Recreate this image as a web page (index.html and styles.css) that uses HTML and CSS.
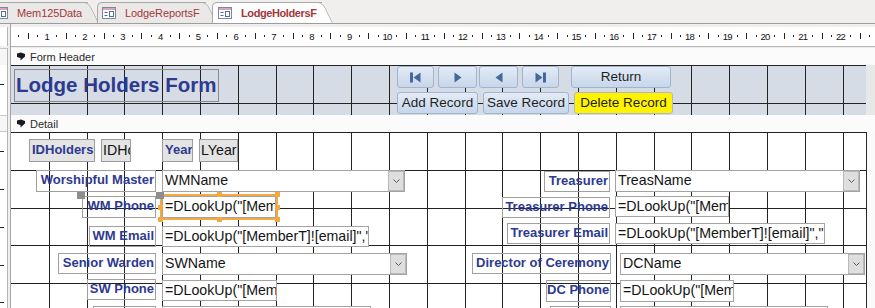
FILE: index.html
```html
<!DOCTYPE html>
<html>
<head>
<meta charset="utf-8">
<title>LodgeHoldersF</title>
<link rel="stylesheet" href="styles.css">
</head>
<body>
<div class="app">
  <div class="tabbar">
    <div class="tab tab1">
      <svg class="ticon" width="14" height="12" viewBox="0 0 14 12"><rect x="0.5" y="0.5" width="13" height="11" fill="#fff" stroke="#7d8799"/><rect x="1" y="1" width="12" height="2" fill="#dba6ae"/><path d="M2.5 5.5h3M2.5 8.5h3" stroke="#4f6ea3"/><rect x="7.5" y="4.5" width="4" height="5" fill="none" stroke="#4f6ea3"/></svg>
      <span class="tlabel">Mem125Data</span>
    </div>
    <div class="tab tab2">
      <svg class="ticon" width="14" height="12" viewBox="0 0 14 12"><rect x="0.5" y="0.5" width="13" height="11" fill="#fff" stroke="#7d8799"/><rect x="1" y="1" width="12" height="2" fill="#dba6ae"/><path d="M2.5 5.5h3M2.5 8.5h3" stroke="#4f6ea3"/><rect x="7.5" y="4.5" width="4" height="5" fill="none" stroke="#4f6ea3"/></svg>
      <span class="tlabel">LodgeReportsF</span>
    </div>
    <div class="tab tab3 active">
      <svg class="ticon" width="14" height="12" viewBox="0 0 14 12"><rect x="0.5" y="0.5" width="13" height="11" fill="#fff" stroke="#7d8799"/><rect x="1" y="1" width="12" height="2" fill="#dba6ae"/><path d="M2.5 5.5h3M2.5 8.5h3" stroke="#4f6ea3"/><rect x="7.5" y="4.5" width="4" height="5" fill="none" stroke="#4f6ea3"/></svg>
      <span class="tlabel">LodgeHoldersF</span>
    </div>
  </div>

  <div class="workspace">
    <div class="vruler">
      <svg width="10" height="284" viewBox="0 0 10 284">
        <rect x="0" y="3" width="7" height="19" fill="#fff"/>
        <rect x="0" y="24" width="7" height="260" fill="#fff"/>
        <rect x="0" y="24" width="7" height="17" fill="#f6f6f6"/>
        <rect x="0" y="91" width="7" height="17" fill="#f6f6f6"/>
        <path d="M7.5 3V22M7.5 24V284" stroke="#b5b5b5"/>
        <path d="M0 24.5H7M0 91.5H7M0 107.5H7" stroke="#c8c8c8"/>
        <path d="M0 60.5H4M0 127.5H4M0 165.5H4M0 203.5H4M0 241.5H4M0 278.5H4" stroke="#222"/>
      </svg>
    </div>

    <div class="formcol">
      <div class="hruler">
        <div class="ruler-band">
          <svg width="864" height="19" viewBox="0 0 864 19">
            <path stroke="#222" d="M7.5 8v2M17.5 6v6M26.5 8v2M45.5 8v2M55.5 6v6M64.5 8v2M83.5 8v2M93.5 6v6M102.5 8v2M121.5 8v2M130.5 6v6M140.5 8v2M159.5 8v2M168.5 6v6M178.5 8v2M196.5 8v2M206.5 6v6M215.5 8v2M234.5 8v2M244.5 6v6M253.5 8v2M272.5 8v2M282.5 6v6M291.5 8v2M310.5 8v2M319.5 6v6M329.5 8v2M348.5 8v2M357.5 6v6M367.5 8v2M385.5 8v2M395.5 6v6M404.5 8v2M423.5 8v2M433.5 6v6M442.5 8v2M461.5 8v2M471.5 6v6M480.5 8v2M499.5 8v2M508.5 6v6M518.5 8v2M537.5 8v2M546.5 6v6M556.5 8v2M574.5 8v2M584.5 6v6M593.5 8v2M612.5 8v2M622.5 6v6M631.5 8v2M650.5 8v2M660.5 6v6M669.5 8v2M688.5 8v2M697.5 6v6M707.5 8v2M726.5 8v2M735.5 6v6M745.5 8v2M763.5 8v2M773.5 6v6M782.5 8v2M801.5 8v2M811.5 6v6M820.5 8v2M839.5 8v2M849.5 6v6M858.5 8v2"/>
            <g class="rnum" text-anchor="middle">
              <text x="35.8" y="12.5">1</text><text x="73.6" y="12.5">2</text><text x="111.4" y="12.5">3</text><text x="149.2" y="12.5">4</text><text x="187" y="12.5">5</text><text x="224.8" y="12.5">6</text><text x="262.6" y="12.5">7</text><text x="300.4" y="12.5">8</text><text x="338.2" y="12.5">9</text><text x="376" y="12.5">10</text><text x="413.8" y="12.5">11</text><text x="451.6" y="12.5">12</text><text x="489.4" y="12.5">13</text><text x="527.2" y="12.5">14</text><text x="565" y="12.5">15</text><text x="602.8" y="12.5">16</text><text x="640.6" y="12.5">17</text><text x="678.4" y="12.5">18</text><text x="716.2" y="12.5">19</text><text x="754" y="12.5">20</text><text x="791.8" y="12.5">21</text><text x="829.6" y="12.5">22</text>
            </g>
          </svg>
        </div>
      </div>

      <div class="secbar">
        <svg class="secicon" width="10" height="9" viewBox="0 0 10 9"><path d="M1 1.5L5 0.5L9 2V4.5L4.5 8.5V6L1 5Z" fill="#1a1a1a"/></svg>
        <span>Form Header</span>
      </div>

      <div class="secwrap headwrap">
        <div class="section header">
          <svg class="grid" width="855" height="50" viewBox="0 0 855 50">
            <path stroke="#222" d="M38.5 0V50M76.5 0V50M113.5 0V50M151.5 0V50M189.5 0V50M227.5 0V50M265.5 0V50M302.5 0V50M340.5 0V50M378.5 0V50M416.5 0V50M454.5 0V50M491.5 0V50M529.5 0V50M567.5 0V50M605.5 0V50M643.5 0V50M680.5 0V50M718.5 0V50M756.5 0V50M794.5 0V50M832.5 0V50M0 0.5H855M0 38.5H855"/>
          </svg>
          <div class="ctl title">Lodge Holders Form</div>
          <div class="navgroup">
            <div class="navrow">
              <div class="btn b-first"><svg width="11" height="11" viewBox="0 0 11 11"><rect x="0" y="0.5" width="3" height="10" fill="#44679c"/><path d="M10.5 0.5v10L3.5 5.5z" fill="#44679c"/></svg></div>
              <div class="btn b-next"><svg width="8" height="11" viewBox="0 0 8 11"><path d="M0.5 0.5v10l7-5z" fill="#44679c"/></svg></div>
              <div class="btn b-prev"><svg width="8" height="11" viewBox="0 0 8 11"><path d="M7.5 0.5v10l-7-5z" fill="#44679c"/></svg></div>
              <div class="btn b-last"><svg width="11" height="11" viewBox="0 0 11 11"><path d="M0.5 0.5v10l7-5z" fill="#44679c"/><rect x="8" y="0.5" width="3" height="10" fill="#44679c"/></svg></div>
              <div class="btn b-return">Return</div>
            </div>
            <div class="navrow">
              <div class="btn b-add">Add Record</div>
              <div class="btn b-save">Save Record</div>
              <div class="btn b-del">Delete Record</div>
            </div>
          </div>
        </div>
      </div>

      <div class="secbar">
        <svg class="secicon" width="10" height="9" viewBox="0 0 10 9"><path d="M1 1.5L5 0.5L9 2V4.5L4.5 8.5V6L1 5Z" fill="#1a1a1a"/></svg>
        <span>Detail</span>
      </div>

      <div class="secwrap detailwrap">
        <div class="section detail">
          <svg class="grid" width="855" height="200" viewBox="0 0 855 200">
            <path stroke="#222" d="M38.5 0V200M76.5 0V200M113.5 0V200M151.5 0V200M189.5 0V200M227.5 0V200M265.5 0V200M302.5 0V200M340.5 0V200M378.5 0V200M416.5 0V200M454.5 0V200M491.5 0V200M529.5 0V200M567.5 0V200M605.5 0V200M643.5 0V200M680.5 0V200M718.5 0V200M756.5 0V200M794.5 0V200M832.5 0V200M0 0.5H855M0 38.5H855M0 76.5H855M0 113.5H855M0 151.5H855M0 189.5H855"/>
          </svg>

          <div class="ctl lbl gray c-idh-l">IDHolders</div>
          <div class="ctl txt gray c-idh-t">IDHolders</div>
          <div class="ctl lbl gray c-year-l">Year</div>
          <div class="ctl txt gray c-year-t">LYear</div>

          <div class="ctl lbl c-wm-l">Worshipful Master</div>
          <div class="ctl cbo c-wm-c"><span class="val">WMName</span><span class="dd"><svg width="7" height="4" viewBox="0 0 7 4"><path d="M0.5 0.5L3.5 3.5L6.5 0.5" fill="none" stroke="#5a5a5a"/></svg></span></div>

          <div class="ctl lbl c-wmp-l">WM Phone</div>
          <div class="sel c-wmp-t">
            <div class="txt seltxt">=DLookUp("[MemberT]![phone]")</div>
            <span class="rh h-tl"></span><span class="rh h-tm"></span><span class="rh h-tr"></span>
            <span class="rh h-lm"></span><span class="rh h-rm"></span>
            <span class="rh h-bl"></span><span class="rh h-bm"></span><span class="rh h-br"></span>
          </div>
          <span class="mh mh-l"></span>
          <span class="mh mh-t"></span>

          <div class="ctl lbl c-wme-l">WM Email</div>
          <div class="ctl txt c-wme-t">=DLookUp("[MemberT]![email]","MemberT")</div>

          <div class="ctl lbl c-sw-l">Senior Warden</div>
          <div class="ctl cbo c-sw-c"><span class="val">SWName</span><span class="dd"><svg width="7" height="4" viewBox="0 0 7 4"><path d="M0.5 0.5L3.5 3.5L6.5 0.5" fill="none" stroke="#5a5a5a"/></svg></span></div>

          <div class="ctl lbl c-swp-l">SW Phone</div>
          <div class="ctl txt c-swp-t">=DLookUp("[MemberT]![phone]")</div>

          <div class="ctl lbl c-swe-l">SW Email</div>
          <div class="ctl txt c-swe-t">=DLookUp("[MemberT]![email]","MemberT")</div>

          <div class="ctl lbl c-tr-l">Treasurer</div>
          <div class="ctl cbo c-tr-c"><span class="val">TreasName</span><span class="dd"><svg width="7" height="4" viewBox="0 0 7 4"><path d="M0.5 0.5L3.5 3.5L6.5 0.5" fill="none" stroke="#5a5a5a"/></svg></span></div>

          <div class="ctl lbl c-trp-l">Treasurer Phone</div>
          <div class="ctl txt c-trp-t">=DLookUp("[MemberT]![phone]")</div>

          <div class="ctl lbl c-tre-l">Treasurer Email</div>
          <div class="ctl txt c-tre-t">=DLookUp("[MemberT]![email]","MemberT")</div>

          <div class="ctl lbl c-dc-l">Director of Ceremony</div>
          <div class="ctl cbo c-dc-c"><span class="val">DCName</span><span class="dd"><svg width="7" height="4" viewBox="0 0 7 4"><path d="M0.5 0.5L3.5 3.5L6.5 0.5" fill="none" stroke="#5a5a5a"/></svg></span></div>

          <div class="ctl lbl c-dcp-l">DC Phone</div>
          <div class="ctl txt c-dcp-t">=DLookUp("[MemberT]![phone]")</div>

          <div class="ctl lbl c-dce-l">DC Email</div>
          <div class="ctl txt c-dce-t">=DLookUp("[MemberT]![email]","MemberT")</div>
        </div>
      </div>
    </div>
  </div>
</div>
</body>
</html>
```
FILE: styles.css
```css
* { box-sizing: border-box; }
html, body { margin: 0; padding: 0; }
body {
  width: 875px;
  height: 308px;
  overflow: hidden;
  background: #f0efee;
  font-family: "Liberation Sans", Arial, sans-serif;
}
svg { display: block; }

.app {
  width: 875px;
  height: 308px;
  overflow: hidden;
  display: flex;
  flex-direction: column;
}

/* ---------- document tabs ---------- */
.tabbar {
  flex: none;
  height: 24px;
  display: flex;
  align-items: flex-end;
  background: #f0efee;
  border-bottom: 1px solid #9d9d9d;
}
.tab {
  position: relative;
  height: 21px;
  display: flex;
  align-items: center;
  gap: 9px;
  padding-bottom: 1px;
  border: 1px solid #a9a9a9;
  border-right: none;
  border-bottom: none;
  border-top-left-radius: 5px;
  background: #eae9e8;
  color: #a4373a;
  font-size: 11px;
  letter-spacing: -0.1px;
  white-space: nowrap;
}
.tab::after {
  content: "";
  position: absolute;
  left: 100%;
  top: -1px;
  bottom: 0;
  width: 10px;
  background: inherit;
  border-top: 1px solid #a9a9a9;
  border-right: 1px solid #a9a9a9;
  border-top-right-radius: 6px;
  transform: skewX(26deg);
  transform-origin: bottom left;
}
.tlabel { position: relative; z-index: 1; }
.ticon { position: relative; z-index: 1; flex: none; }
.tab1 { z-index: 1; margin-left: -10px; width: 98px; padding-left: 3px; }
.tab2 { z-index: 2; margin-left: 9px; width: 109px; padding-left: 4px; }
.tab3 { z-index: 3; margin-left: 6px; width: 110px; padding-left: 5px; }
.tab.active { background: #fdfdfd; font-weight: bold; letter-spacing: -0.4px; }

/* ---------- workspace ---------- */
.workspace {
  flex: 1;
  min-height: 0;
  display: flex;
}
.vruler {
  flex: none;
  width: 11px;
  background: #f0efee;
  border-right: 1px solid #a3a3a3;
}
.formcol {
  flex: 1;
  min-width: 0;
  display: flex;
  flex-direction: column;
  background: #f0efee;
}

.hruler {
  flex: none;
  height: 24px;
  padding-top: 3px;
  padding-bottom: 1px;
}
.ruler-band {
  height: 20px;
  background: #fff;
  border-bottom: 1px solid #b4b4b4;
}
.rnum {
  font-family: "Liberation Sans", Arial, sans-serif;
  font-size: 9.5px;
  letter-spacing: -0.8px;
  fill: #111;
}

.secbar {
  flex: none;
  height: 17px;
  display: flex;
  align-items: center;
  gap: 4px;
  padding-left: 5px;
  background: #fbfbfb;
  font-size: 11px;
  color: #2b2b2b;
}

.secwrap { flex: none; }
.headwrap { height: 50px; background: #e8e8e8; }
.detailwrap { flex: 1; min-height: 0; background: #fafafa; overflow: hidden; }

.section {
  position: relative;
  width: 855px;
}
.header { height: 50px; background: #d6dce5; }
.detail { width: 856px; height: 200px; background: #fff; border-right: 1px solid #2a2a2a; }
.grid { position: absolute; left: 0; top: 0; shape-rendering: crispEdges; }

/* ---------- controls ---------- */
.ctl {
  position: absolute;
  overflow: hidden;
  white-space: nowrap;
}
.title {
  left: 3px; top: 4px; width: 205px; height: 33px;
  border: 1px solid #8a8a8a;
  padding-left: 1px;
  font-size: 20.5px;
  font-weight: bold;
  line-height: 29px;
  color: #2e3a90;
}

.navgroup {
  position: absolute;
  left: 386px;
  top: 1px;
  display: flex;
  flex-direction: column;
  gap: 4px;
}
.navrow { display: flex; }
.btn {
  height: 22px;
  display: flex;
  align-items: center;
  justify-content: center;
  border: 1px solid #a2b3cd;
  border-radius: 3px;
  background: linear-gradient(#e3ebf6, #c7d6ea);
  font-size: 13.5px;
  line-height: 20px;
  color: #1e1e1e;
  white-space: nowrap;
}
.b-first { width: 37px; }
.b-next { width: 39px; margin-left: 4px; }
.b-prev { width: 39px; margin-left: 2px; }
.b-last { width: 37px; margin-left: 4px; }
.b-return { width: 100px; margin-left: 12px; }
.b-add { width: 81px; }
.b-save { width: 86px; margin-left: 5px; }
.b-del { width: 99px; margin-left: 5px; background: #fff300; border-color: #b2b8c2; }

.lbl {
  border: 1px solid #a0a0a0;
  color: #2e3a90;
  font-size: 13px;
  font-weight: bold;
  text-align: right;
  padding-right: 1px;
  line-height: 17px;
}
.lbl.gray {
  background: #e4e4e4;
  border-color: #9c9c9c;
  text-align: left;
  padding-left: 2px;
  padding-right: 0;
  line-height: 19px;
}
.txt {
  background: #fff;
  border: 1px solid #a3a3a3;
  color: #141414;
  font-size: 14.2px;
  padding-left: 2px;
  line-height: 19px;
  overflow: hidden;
  white-space: nowrap;
}
.txt.gray { background: #e4e4e4; border-color: #9c9c9c; padding-left: 1px; line-height: 20px; }

.cbo {
  display: flex;
  background: #fff;
  border: 1px solid #a3a3a3;
}
.cbo .val {
  flex: 1;
  padding-left: 2px;
  font-size: 14.2px;
  line-height: 19px;
  color: #141414;
  overflow: hidden;
}
.cbo .dd {
  flex: none;
  width: 16px;
  display: flex;
  align-items: center;
  justify-content: center;
  background: #dedede;
  border: 1px solid #b9b9b9;
}

/* positions on the design surface */
.c-idh-l { left: 18px; top: 7px; width: 66px; height: 23px; }
.c-idh-t { left: 90px; top: 7px; width: 30px; height: 23px; }
.c-year-l { left: 151px; top: 7px; width: 31px; height: 23px; }
.c-year-t { left: 188px; top: 7px; width: 39px; height: 23px; }
.c-wm-l { left: 25px; top: 38px; width: 120px; height: 22px; }
.c-wm-c { left: 151px; top: 38px; width: 243px; height: 22px; }
.c-wmp-l { left: 71px; top: 64px; width: 74px; height: 22px; }
.c-wme-l { left: 78px; top: 94px; width: 67px; height: 21px; }
.c-wme-t { left: 151px; top: 94px; width: 207px; height: 21px; }
.c-sw-l { left: 47px; top: 121px; width: 98px; height: 21px; }
.c-sw-c { left: 151px; top: 121px; width: 245px; height: 22px; }
.c-swp-l { left: 76px; top: 147px; width: 69px; height: 21px; }
.c-swp-t { left: 151px; top: 148px; width: 115px; height: 21px; }
.c-swe-l { left: 82px; top: 174px; width: 63px; height: 21px; }
.c-swe-t { left: 151px; top: 174px; width: 209px; height: 21px; }
.c-tr-l { left: 533px; top: 39px; width: 66px; height: 21px; }
.c-tr-c { left: 604px; top: 38px; width: 245px; height: 22px; }
.c-trp-l { left: 491px; top: 65px; width: 108px; height: 21px; }
.c-trp-t { left: 604px; top: 64px; width: 114px; height: 21px; }
.c-tre-l { left: 496px; top: 91px; width: 103px; height: 21px; }
.c-tre-t { left: 604px; top: 91px; width: 210px; height: 21px; }
.c-dc-l { left: 461px; top: 121px; width: 139px; height: 21px; }
.c-dc-c { left: 609px; top: 121px; width: 245px; height: 22px; }
.c-dcp-l { left: 535px; top: 148px; width: 65px; height: 22px; }
.c-dcp-t { left: 609px; top: 148px; width: 114px; height: 22px; }
.c-dce-l { left: 539px; top: 174px; width: 61px; height: 21px; }
.c-dce-t { left: 609px; top: 174px; width: 208px; height: 21px; }

/* selected control */
.sel {
  position: absolute;
  outline: 2px solid #f5a742;
}
.c-wmp-t { left: 151px; top: 64px; width: 114px; height: 22px; }
.seltxt { width: 100%; height: 100%; }
.rh {
  position: absolute;
  width: 5px;
  height: 5px;
  background: #f5a742;
}
.h-tl { left: -4px; top: -4px; }
.h-tm { left: 55px; top: -4px; }
.h-tr { left: 113px; top: -4px; }
.h-lm { left: -4px; top: 9px; }
.h-rm { left: 113px; top: 9px; }
.h-bl { left: -4px; top: 21px; }
.h-bm { left: 55px; top: 21px; }
.h-br { left: 113px; top: 21px; }
.mh {
  position: absolute;
  width: 8px;
  height: 7px;
  background: #8d8d8d;
}
.mh-l { left: 66px; top: 60px; }
.mh-t { left: 145px; top: 60px; }
```
